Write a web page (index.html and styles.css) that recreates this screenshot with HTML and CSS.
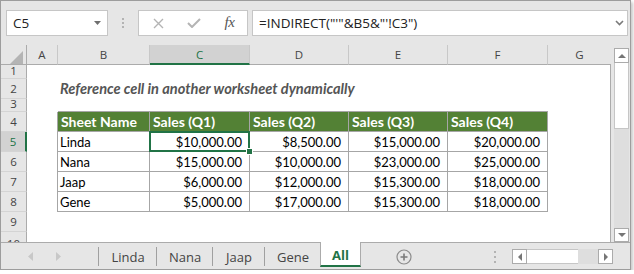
FILE: index.html
```html
<!DOCTYPE html>
<html>
<head>
<meta charset="utf-8">
<link rel="stylesheet" href="styles.css">
</head>
<body>
<div class="window">
  <div class="toolbar">
    <div class="namebox"><span>C5</span><svg width="7" height="4" viewBox="0 0 7 4"><polygon points="0,0 7,0 3.5,4" fill="#6f6f6f"/></svg></div>
    <div class="grip"><i></i><i></i><i></i></div>
    <div class="fxgroup">
      <span class="fxbtn"><svg width="11" height="11" viewBox="0 0 11 11"><path d="M1 1L10 10M10 1L1 10" stroke="#b4b4b4" stroke-width="1.4" fill="none"/></svg></span>
      <span class="fxbtn"><svg width="14" height="10" viewBox="0 0 14 10"><path d="M1 5L5 9L13 1" stroke="#b4b4b4" stroke-width="2" fill="none"/></svg></span>
      <span class="fxbtn fx">fx</span>
    </div>
    <div class="formula"><span>=INDIRECT("'"&amp;B5&amp;"'!C3")</span><svg width="9" height="6" viewBox="0 0 9 6"><path d="M1 1L4.5 4.5L8 1" stroke="#7a7a7a" stroke-width="1.6" fill="none"/></svg></div>
  </div>

  <div class="sheet-area">
    <div class="grid">
      <div class="ch corner"><svg width="13" height="13" viewBox="0 0 13 13"><polygon points="13,0 13,13 0,13" fill="#b4b4b4"/></svg></div>
      <div class="ch">A</div><div class="ch">B</div><div class="ch sel">C</div><div class="ch">D</div><div class="ch">E</div><div class="ch">F</div><div class="ch last">G</div>

      <div class="rh r1">1</div><div class="c"></div><div class="c"></div><div class="c"></div><div class="c"></div><div class="c"></div><div class="c"></div><div class="c g"></div>

      <div class="rh">2</div><div class="c"></div><div class="c title">Reference cell in another worksheet dynamically</div><div class="c g"></div>

      <div class="rh r3">3</div><div class="c"></div><div class="c tt"></div><div class="c tt"></div><div class="c tt"></div><div class="c tt"></div><div class="c tt"></div><div class="c g"></div>

      <div class="rh">4</div><div class="c tl"></div><div class="t h">Sheet Name</div><div class="t h">Sales (Q1)</div><div class="t h">Sales (Q2)</div><div class="t h">Sales (Q3)</div><div class="t h">Sales (Q4)</div><div class="c g"></div>

      <div class="rh sel">5</div><div class="c tl"></div><div class="t">Linda</div><div class="t n active">$10,000.00<span class="handle"></span></div><div class="t n">$8,500.00</div><div class="t n">$15,000.00</div><div class="t n">$20,000.00</div><div class="c g"></div>

      <div class="rh">6</div><div class="c tl"></div><div class="t">Nana</div><div class="t n">$15,000.00</div><div class="t n">$10,000.00</div><div class="t n">$23,000.00</div><div class="t n">$25,000.00</div><div class="c g"></div>

      <div class="rh">7</div><div class="c tl"></div><div class="t">Jaap</div><div class="t n">$6,000.00</div><div class="t n">$12,000.00</div><div class="t n">$15,300.00</div><div class="t n">$18,000.00</div><div class="c g"></div>

      <div class="rh">8</div><div class="c tl"></div><div class="t">Gene</div><div class="t n">$5,000.00</div><div class="t n">$17,000.00</div><div class="t n">$15,300.00</div><div class="t n">$18,000.00</div><div class="c g"></div>

      <div class="rh">9</div><div class="c"></div><div class="c"></div><div class="c"></div><div class="c"></div><div class="c"></div><div class="c"></div><div class="c g"></div>

      <div class="rh cut">10</div><div class="c"></div><div class="c"></div><div class="c"></div><div class="c"></div><div class="c"></div><div class="c"></div><div class="c g"></div>
    </div>
    <div class="vscroll">
      <div class="sbtn"><svg width="8" height="4" viewBox="0 0 8 4"><polygon points="0,4 8,4 4,0" fill="#767676"/></svg></div>
      <div class="vthumb"></div>
      <div class="vtrack"></div>
      <div class="sbtn"><svg width="8" height="4" viewBox="0 0 8 4"><polygon points="0,0 8,0 4,4" fill="#767676"/></svg></div>
    </div>
  </div>

  <div class="tabbar">
    <div class="nav">
      <svg width="5" height="9" viewBox="0 0 5 9"><polygon points="5,0 5,9 0,4.5" fill="#c8c8c8"/></svg>
      <svg width="5" height="9" viewBox="0 0 5 9"><polygon points="0,0 0,9 5,4.5" fill="#c8c8c8"/></svg>
    </div>
    <div class="tab w58">Linda</div>
    <div class="tab w56">Nana</div>
    <div class="tab w52">Jaap</div>
    <div class="tab w56">Gene</div>
    <div class="tab current">All</div>
    <svg class="plus" width="16" height="16" viewBox="0 0 16 16"><circle cx="8" cy="8" r="7" fill="none" stroke="#8c8c8c" stroke-width="1.2"/><path d="M4.5 8H11.5M8 4.5V11.5" stroke="#7a7a7a" stroke-width="1.6"/></svg>
    <div class="hgrip"><i></i><i></i><i></i></div>
    <div class="hscroll">
      <div class="sbtn"><svg width="4" height="8" viewBox="0 0 4 8"><polygon points="4,0 4,8 0,4" fill="#767676"/></svg></div>
      <div class="hthumb"></div>
      <div class="htrack"></div>
      <div class="sbtn"><svg width="4" height="8" viewBox="0 0 4 8"><polygon points="0,0 0,8 4,4" fill="#767676"/></svg></div>
    </div>
  </div>
</div>
</body>
</html>
```

FILE: styles.css
```css
* { box-sizing: border-box; }

body {
  margin: 0;
  background: #fff;
  font-family: "Open Sans", "Liberation Sans", sans-serif;
}

.window {
  width: 631px;
  height: 270px;
  border: 1px solid #9d9d9d;
  background: #e6e6e6;
  box-shadow: 2px 2px 3px rgba(0, 0, 0, 0.22);
  display: flex;
  flex-direction: column;
  overflow: hidden;
}

/* ---------- formula toolbar ---------- */
.toolbar {
  flex: none;
  height: 44px;
  display: flex;
  align-items: flex-start;
  padding-top: 9px;
}

.namebox {
  margin-left: 5px;
  width: 102px;
  height: 26px;
  background: #fff;
  border: 1px solid #c6c6c6;
  display: flex;
  align-items: center;
  justify-content: space-between;
  padding: 0 6px 0 6px;
  font-size: 13.5px;
  color: #222;
}

.grip {
  width: 30px;
  height: 26px;
  display: flex;
  flex-direction: column;
  align-items: center;
  justify-content: center;
  gap: 2px;
}
.grip i, .hgrip i {
  display: block;
  width: 2px;
  height: 2px;
  background: #b3b3b3;
}

.fxgroup {
  width: 110px;
  height: 26px;
  border: 1px solid #c6c6c6;
  background: #fff;
  display: flex;
  padding-left: 1px;
}
.fxbtn {
  flex: 0 0 36px;
  display: flex;
  align-items: center;
  justify-content: center;
}
.fxbtn.fx {
  flex-basis: 35px;
  font-family: "Liberation Serif", serif;
  font-style: italic;
  font-size: 15px;
  color: #555;
  letter-spacing: -0.5px;
  padding-bottom: 2px;
}

.formula {
  flex: 1;
  margin-left: 4px;
  margin-right: 2px;
  height: 26px;
  border: 1px solid #c6c6c6;
  background: #fff;
  display: flex;
  align-items: center;
  justify-content: space-between;
  padding: 0 3px 0 6px;
  font-size: 13.5px;
  color: #222;
}

/* ---------- sheet ---------- */
.sheet-area {
  flex: none;
  height: 197px;
  display: flex;
}

.grid {
  width: 610px;
  display: grid;
  grid-template-columns: 26px 31px 92px 100px 99px 99px 100px 63px;
  grid-template-rows: 20px 14px 20px 13px repeat(6, 20px) 10px;
}

.ch {
  background: #e6e6e6;
  border-right: 1px solid #c8c8c8;
  border-bottom: 1px solid #ababab;
  display: flex;
  align-items: center;
  justify-content: center;
  font-size: 11.5px;
  color: #444;
}
.ch.corner {
  justify-content: flex-end;
  align-items: flex-end;
  padding: 0 3px 0 0;
  border-right-color: #ababab;
}
.ch.sel {
  background: #d2d2d2;
  border-bottom: 2px solid #217346;
  color: #217346;
}
.ch.last { border-right: none; }

.rh {
  background: #e6e6e6;
  border-right: 1px solid #ababab;
  border-bottom: 1px solid #d4d4d4;
  display: flex;
  align-items: center;
  justify-content: center;
  font-size: 11.5px;
  line-height: 14px;
  color: #444;
  overflow: hidden;
}
.rh.r1 { line-height: 12px; padding-bottom: 1px; overflow: visible; }
.rh.r3 { align-items: flex-start; line-height: 10px; }
.rh.sel {
  background: #d2d2d2;
  border-right: 2px solid #217346;
  color: #217346;
}
.rh.cut {
  border-bottom: none;
  align-items: flex-start;
  padding-top: 5px;
}

.c { background: #fff; }
.c.g { border-right: 1px solid #ababab; }
.c.tl { border-right: 1px solid #a6a6a6; }
.c.tt { border-bottom: 1px solid #a6a6a6; }

.title {
  grid-column: span 5;
  display: flex;
  align-items: flex-end;
  padding: 0 0 2px 2px;
  white-space: nowrap;
  font-family: Lato, "Liberation Sans", sans-serif;
  font-style: italic;
  font-weight: 700;
  font-size: 14.6px;
  line-height: 17px;
  color: #555555;
}

.t {
  background: #fff;
  border-right: 1px solid #a6a6a6;
  border-bottom: 1px solid #a6a6a6;
  display: flex;
  align-items: flex-end;
  padding: 0 7px 1px 2px;
  white-space: nowrap;
  font-family: Lato, "Liberation Sans", sans-serif;
  font-size: 13px;
  line-height: 16px;
  color: #000;
}
.t.h {
  background: #538135;
  color: #fff;
  font-weight: 700;
  font-size: 14px;
  padding-left: 3px;
}
.t.n { justify-content: flex-end; }

.t.active { position: relative; }
.t.active::before {
  content: "";
  position: absolute;
  top: -1px;
  left: -1px;
  right: -1px;
  bottom: -1px;
  border: 2px solid #217346;
}
.handle {
  position: absolute;
  right: -4px;
  bottom: -4px;
  width: 7px;
  height: 7px;
  background: #217346;
  border: 1px solid #fff;
}

/* ---------- scrollbars ---------- */
.vscroll {
  flex: 1;
  display: flex;
  flex-direction: column;
  padding: 3px 1px 0 3px;
}
.sbtn {
  flex: none;
  width: 15px;
  height: 15px;
  background: #fff;
  border: 1px solid #ababab;
  display: flex;
  align-items: center;
  justify-content: center;
}
.vscroll .sbtn:last-child { height: 14px; }
.vthumb {
  flex: none;
  height: 66px;
  background: #fff;
  border: 1px solid #c6c6c6;
  border-top: none;
}
.vtrack {
  flex: 1;
  background: #dedede;
}

/* ---------- sheet tabs ---------- */
.tabbar {
  flex: none;
  height: 27px;
  border-top: 1px solid #ababab;
  display: flex;
  align-items: flex-start;
}

.nav {
  flex: none;
  width: 97px;
  display: flex;
  gap: 23px;
  padding: 9px 0 0 27px;
}

.tab {
  flex: none;
  height: 19px;
  margin-top: 4px;
  border-left: 1px solid #a0a0a0;
  display: flex;
  align-items: center;
  justify-content: center;
  font-size: 13px;
  color: #444;
  padding-left: 1px;
}
.w58 { width: 58px; }
.w56 { width: 56px; }
.w52 { width: 52px; }

.tab.current {
  width: 41px;
  height: 25px;
  margin-top: -1px;
  padding: 2px 0 0 0;
  background: #fff;
  border-left: 1px solid #ababab;
  border-right: 1px solid #ababab;
  border-bottom: 2px solid #217346;
  font-weight: 700;
  color: #217346;
}

.plus {
  flex: none;
  margin: 6px 0 0 35px;
}

.hgrip {
  flex: none;
  margin: 8px 0 0 82px;
  display: flex;
  flex-direction: column;
  gap: 3px;
}

.hscroll {
  flex: none;
  margin: 6px 0 0 16px;
  width: 101px;
  height: 15px;
  display: flex;
}
.hthumb {
  flex: none;
  width: 51px;
  background: #fff;
  border-top: 1px solid #c6c6c6;
  border-bottom: 1px solid #c6c6c6;
}
.htrack {
  flex: none;
  width: 20px;
  background: #dedede;
}
```
